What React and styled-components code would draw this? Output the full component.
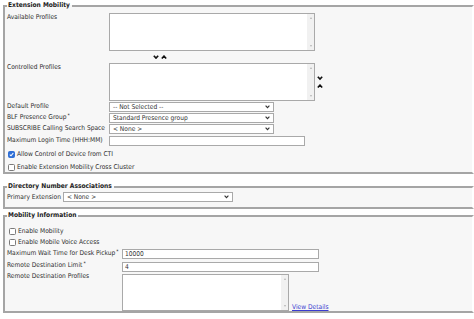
import React from 'react';
import styled, { createGlobalStyle } from 'styled-components';

const GlobalStyle = createGlobalStyle`
  html, body {
    margin: 0;
    padding: 0;
    background: #fff;
    overflow: hidden;
  }
  body {
    font-family: "DejaVu Sans Condensed", "Liberation Sans", sans-serif;
    font-size: 6.6px;
    color: #2e2e2e;
  }
`;

const Page = styled.div`
  width: 474px;
  height: 319px;
  padding-top: 1px;
  box-sizing: border-box;
`;

const Fieldset = styled.fieldset`
  margin: 0 0 ${(p) => p.$gap || 0}px 3px;
  padding: ${(p) => p.$pad || '0 0 2px 2px'};
  border: 2px solid #a5a5a5;
  border-right-color: #fff;
  background: #f7f7f7;
  min-width: 0;
`;

const Legend = styled.legend`
  padding: 0 2px 0 1px;
  margin-left: 0;
  font-weight: bold;
  line-height: 9px;
  color: #222;
`;

const Grid = styled.div`
  display: grid;
  grid-template-columns: ${(p) => p.$label}px 1fr;
  align-items: center;
`;

const Label = styled.div`
  line-height: 9px;
  white-space: nowrap;
  align-self: ${(p) => (p.$top ? 'start' : 'center')};
`;

const Cell = styled.div`
  display: flex;
  align-items: ${(p) => p.$align || 'center'};
  gap: ${(p) => p.$gap || 0}px;
  padding-top: ${(p) => p.$mt || 0}px;
  padding-left: ${(p) => p.$ml || 0}px;
  height: ${(p) => (p.$h ? `${p.$h}px` : 'auto')};
`;

const Req = styled.sup`
  font-size: 5px;
  line-height: 0;
  vertical-align: 2px;
  margin-left: 1px;
  color: #222;
`;

const ListBox = styled.div`
  width: ${(p) => p.$w}px;
  height: ${(p) => p.$h}px;
  box-sizing: border-box;
  border: 1px solid #a9a9a9;
  background: #fff;
  display: flex;
  justify-content: flex-end;
`;

const ScrollBar = styled.div`
  width: 7px;
  background: #f1f1f1;
  display: flex;
  flex-direction: column;
  justify-content: space-between;
  align-items: center;
  padding: 3px 0;
  box-sizing: border-box;
`;

const Tri = styled.div`
  width: 0;
  height: 0;
  border-left: 1.5px solid transparent;
  border-right: 1.5px solid transparent;
  ${(p) => (p.$up ? 'border-bottom: 2px solid #b5b5b5;' : 'border-top: 2px solid #b5b5b5;')}
`;

const SelectBox = styled.div`
  width: ${(p) => p.$w}px;
  height: 10px;
  box-sizing: border-box;
  border: 1px solid #a9a9a9;
  background: #fff;
  display: flex;
  align-items: center;
  justify-content: space-between;
  padding: 0 3px;
  line-height: 8px;
  color: #333;
`;

const TextBox = styled.div`
  width: ${(p) => p.$w}px;
  height: 10px;
  box-sizing: border-box;
  border: 1px solid #a9a9a9;
  background: #fff;
  padding: 0 2px;
  line-height: 8px;
  color: #333;
`;

const ArrowPair = styled.div`
  display: flex;
  flex-direction: ${(p) => (p.$column ? 'column' : 'row')};
  gap: ${(p) => (p.$column ? 3 : 2)}px;
`;

const CheckRow = styled.label`
  grid-column: 1 / -1;
  display: flex;
  align-items: center;
  gap: 2px;
  height: ${(p) => p.$h || 12}px;
  padding-left: ${(p) => p.$ml || 0}px;
  line-height: 9px;
`;

const Box = styled.span`
  width: 7px;
  height: 7px;
  box-sizing: border-box;
  border-radius: 1.5px;
  border: 1px solid ${(p) => (p.$checked ? '#2f6fd6' : '#7a7a7a')};
  background: ${(p) => (p.$checked ? '#2f6fd6' : '#fff')};
  display: flex;
  align-items: center;
  justify-content: center;
`;

const Inline = styled.div`
  display: flex;
  align-items: center;
  gap: 2px;
  line-height: 9px;
`;

const Link = styled.a`
  color: #3b3bd0;
  text-decoration: underline;
  line-height: 8px;
  margin-left: 3px;
  cursor: pointer;
`;

const Chevron = ({ up, size = 6 }) => (
  <svg width={size} height={size * 0.7} viewBox="0 0 6 4.2">
    <path
      d={up ? 'M0.8 3.5 L3 1.1 L5.2 3.5' : 'M0.8 0.7 L3 3.1 L5.2 0.7'}
      fill="none"
      stroke="#111"
      strokeWidth="1.6"
    />
  </svg>
);

const SmallChevron = () => (
  <svg width="5" height="3.5" viewBox="0 0 5 3.5">
    <path d="M0.6 0.6 L2.5 2.7 L4.4 0.6" fill="none" stroke="#333" strokeWidth="1.1" />
  </svg>
);

const Check = () => (
  <svg width="5" height="5" viewBox="0 0 5 5">
    <path d="M0.8 2.6 L2 3.8 L4.3 1" fill="none" stroke="#fff" strokeWidth="1.1" />
  </svg>
);

const List = ({ w, h }) => (
  <ListBox $w={w} $h={h}>
    <ScrollBar>
      <Tri $up />
      <Tri />
    </ScrollBar>
  </ListBox>
);

const Select = ({ w, value }) => (
  <SelectBox $w={w}>
    <span>{value}</span>
    <SmallChevron />
  </SelectBox>
);

const CheckBox = ({ checked, label, h, ml }) => (
  <CheckRow $h={h} $ml={ml}>
    <Box $checked={checked}>{checked && <Check />}</Box>
    {label}
  </CheckRow>
);

export default function App() {
  return (
    <Page>
      <GlobalStyle />
      <Fieldset $gap={8} $pad="3px 0 0 2px">
        <Legend>Extension Mobility</Legend>
        <Grid $label={102}>
          <Label $top>Available Profiles</Label>
          <Cell>
            <List w={206} h={38} />
          </Cell>
          <span />
          <Cell $h={12} $ml={44}>
            <ArrowPair>
              <Chevron />
              <Chevron up />
            </ArrowPair>
          </Cell>
          <Label $top>Controlled Profiles</Label>
          <Cell $gap={2}>
            <List w={206} h={38} />
            <ArrowPair $column>
              <Chevron />
              <Chevron up />
            </ArrowPair>
          </Cell>
          <Label>Default Profile</Label>
          <Cell $mt={1}>
            <Select w={165} value="-- Not Selected --" />
          </Cell>
          <Label>
            BLF Presence Group<Req>*</Req>
          </Label>
          <Cell $mt={1}>
            <Select w={165} value="Standard Presence group" />
          </Cell>
          <Label>SUBSCRIBE Calling Search Space</Label>
          <Cell $mt={1}>
            <Select w={165} value="< None >" />
          </Cell>
          <Label>Maximum Login Time (HHH:MM)</Label>
          <Cell $mt={2}>
            <TextBox $w={196} />
          </Cell>
          <CheckBox checked label="Allow Control of Device from CTI" h={17} ml={1} />
          <CheckBox label="Enable Extension Mobility Cross Cluster" h={9} ml={1} />
        </Grid>
      </Fieldset>

      <Fieldset $gap={2} $pad="1px 0 5px 2px">
        <Legend>Directory Number Associations</Legend>
        <Inline>
          <span>Primary Extension</span>
          <Select w={170} value="< None >" />
        </Inline>
      </Fieldset>

      <Fieldset $pad="5px 0 0 2px">
        <Legend>Mobility Information</Legend>
        <Grid $label={115}>
          <CheckBox label="Enable Mobility" h={12} ml={2} />
          <CheckBox label="Enable Mobile Voice Access" h={11} ml={2} />
          <Label>
            Maximum Wait Time for Desk Pickup<Req>*</Req>
          </Label>
          <Cell $mt={1}>
            <TextBox $w={197}>10000</TextBox>
          </Cell>
          <Label>
            Remote Destination Limit<Req>*</Req>
          </Label>
          <Cell $mt={3}>
            <TextBox $w={197}>4</TextBox>
          </Cell>
          <Label $top>Remote Destination Profiles</Label>
          <Cell $mt={2} $align="flex-end">
            <List w={167} h={37} />
            <Link>View Details</Link>
          </Cell>
        </Grid>
      </Fieldset>
    </Page>
  );
}
